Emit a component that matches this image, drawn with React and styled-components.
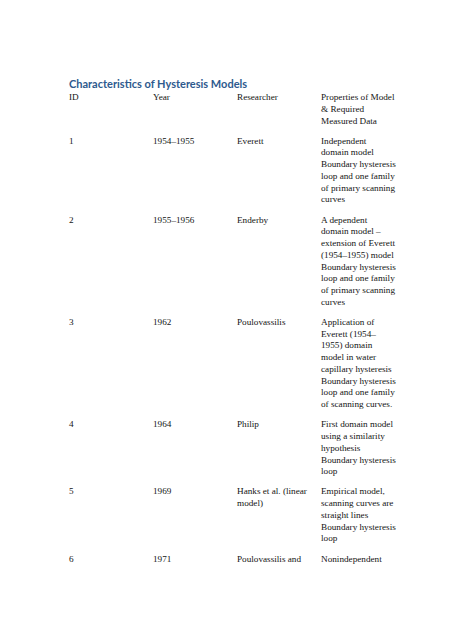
import React from 'react';
import styled, { createGlobalStyle } from 'styled-components';

const rows = [
  {
    id: 'ID',
    year: 'Year',
    researcher: ['Researcher'],
    properties: ['Properties of Model', '& Required', 'Measured Data']
  },
  {
    id: '1',
    year: '1954–1955',
    researcher: ['Everett'],
    properties: [
      'Independent',
      'domain model',
      'Boundary hysteresis',
      'loop and one family',
      'of primary scanning',
      'curves'
    ]
  },
  {
    id: '2',
    year: '1955–1956',
    researcher: ['Enderby'],
    properties: [
      'A dependent',
      'domain model –',
      'extension of Everett',
      '(1954–1955) model',
      'Boundary hysteresis',
      'loop and one family',
      'of primary scanning',
      'curves'
    ]
  },
  {
    id: '3',
    year: '1962',
    researcher: ['Poulovassilis'],
    properties: [
      'Application of',
      'Everett (1954–',
      '1955) domain',
      'model in water',
      'capillary hysteresis',
      'Boundary hysteresis',
      'loop and one family',
      'of scanning curves.'
    ]
  },
  {
    id: '4',
    year: '1964',
    researcher: ['Philip'],
    properties: [
      'First domain model',
      'using a similarity',
      'hypothesis',
      'Boundary hysteresis',
      'loop'
    ]
  },
  {
    id: '5',
    year: '1969',
    researcher: ['Hanks et al. (linear', 'model)'],
    properties: [
      'Empirical model,',
      'scanning curves are',
      'straight lines',
      'Boundary hysteresis',
      'loop'
    ]
  },
  {
    id: '6',
    year: '1971',
    researcher: ['Poulovassilis and'],
    properties: ['Nonindependent']
  }
];

const GlobalStyle = createGlobalStyle`
  html, body {
    margin: 0;
    padding: 0;
    background: #ffffff;
  }
`;

const Page = styled.div`
  width: 474px;
  height: 632px;
  overflow: hidden;
  box-sizing: border-box;
  padding: 77px 0 0 69px;
  background: #ffffff;
`;

const Title = styled.h1`
  margin: 0 0 1px;
  font-family: Lato, 'Open Sans', sans-serif;
  font-size: 11px;
  line-height: 14px;
  font-weight: 700;
  color: #2e5a8e;
`;

const Table = styled.div`
  display: flex;
  flex-direction: column;
`;

const Row = styled.div`
  display: grid;
  grid-template-columns: 84px 84px 84px 90px;
  margin-bottom: 8.4px;
`;

const Cell = styled.div`
  font-family: 'Liberation Serif', 'Times New Roman', serif;
  font-size: 9.2px;
  line-height: 11.75px;
  color: #141414;
  white-space: nowrap;
`;

function Lines({ lines }) {
  return lines.map((line, i) => <div key={i}>{line}</div>);
}

export default function App() {
  return (
    <>
      <GlobalStyle />
      <Page>
        <Title>Characteristics of Hysteresis Models</Title>
        <Table>
          {rows.map((row) => (
            <Row key={row.id}>
              <Cell>{row.id}</Cell>
              <Cell>{row.year}</Cell>
              <Cell>
                <Lines lines={row.researcher} />
              </Cell>
              <Cell>
                <Lines lines={row.properties} />
              </Cell>
            </Row>
          ))}
        </Table>
      </Page>
    </>
  );
}
